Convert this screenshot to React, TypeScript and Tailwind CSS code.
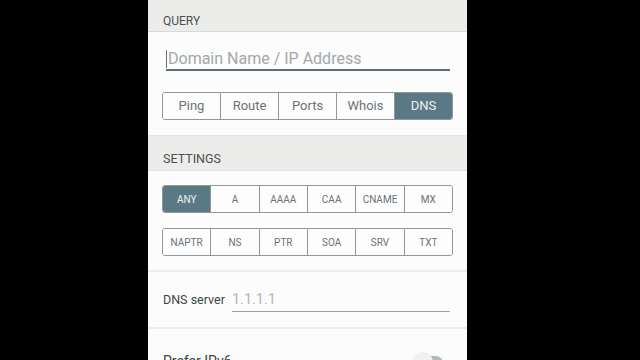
import React from "react";

const font = { fontFamily: "Roboto, 'Noto Sans', sans-serif" };

function Seg({ items, active, size }: { items: string[]; active: string; size: "lg" | "sm" }) {
  return (
    <div className="flex h-[28px] rounded-[3px] border border-[#8f9799] overflow-hidden">
      {items.map((it, i) => (
        <div
          key={it}
          className={
            "flex-1 flex items-center justify-center " +
            (i > 0 ? "border-l border-[#8f9799] " : "") +
            (it === active ? "bg-[#5a7985] text-[#eef2f3] " : "bg-[#fcfdfc] text-[#6c7274] ") +
            (size === "lg" ? "text-[13px]" : "text-[10px]")
          }
        >
          {it}
        </div>
      ))}
    </div>
  );
}

export default function App() {
  return (
    <div className="w-[640px] h-[360px] bg-black flex overflow-hidden" style={font}>
      <div className="ml-[148px] w-[319px] h-[360px] bg-[#fbfcfb] flex flex-col overflow-hidden">
        <div className="h-[32px] shrink-0 bg-[#ecedea] border-b border-[#d6d9d6] flex items-end pl-[15px] pb-[3px]">
          <span className="text-[12px] leading-[14px] text-[#4a4f50]">QUERY</span>
        </div>
        <div className="pl-[18px] pr-[17px] pt-[16px] shrink-0">
          <div className="h-[23px] border-b-2 border-[#5c6f76] flex items-center">
            <div className="w-[1px] h-[18px] bg-[#5c6f76] mr-[1px]" />
            <span className="text-[16px] leading-[20px] text-[#a3a8a9]">Domain Name / IP Address</span>
          </div>
        </div>
        <div className="pl-[14px] pr-[14px] pt-[21px] pb-[15px] shrink-0">
          <Seg items={["Ping", "Route", "Ports", "Whois", "DNS"]} active="DNS" size="lg" />
        </div>
        <div className="h-[36px] shrink-0 bg-[#ecedea] border-t border-[#e2e4e1] border-b border-[#d6d9d6] flex items-end pl-[15px] pb-[4px]">
          <span className="text-[12.5px] leading-[14px] text-[#4a4f50]">SETTINGS</span>
        </div>
        <div className="pl-[14px] pr-[14px] pt-[14px] pb-[14px] flex flex-col gap-[15px] shrink-0">
          <Seg items={["ANY", "A", "AAAA", "CAA", "CNAME", "MX"]} active="ANY" size="sm" />
          <Seg items={["NAPTR", "NS", "PTR", "SOA", "SRV", "TXT"]} active="" size="sm" />
        </div>
        <div className="h-[2px] bg-[#ecedea] shrink-0" />
        <div className="h-[57px] shrink-0 flex items-center pl-[15px] pr-[17px] border-b-2 border-[#eceeeb]">
          <span className="text-[12.5px] text-[#3f4445] mr-[7px] mt-[1px]">DNS server</span>
          <div className="flex-1 h-[22px] border-b border-[#9ea4a5] flex items-center mt-[2px]">
            <span className="text-[14.5px] text-[#b3b7b8] leading-[18px]">1.1.1.1</span>
          </div>
        </div>
        <div className="flex items-start pl-[15px] pr-[22px] pt-[22px] shrink-0 relative">
          <span className="text-[14px] text-[#3f4445]">Prefer IPv6</span>
          <div className="ml-auto relative w-[32px] h-[20px] mt-[1px]">
            <div className="absolute left-[6px] right-[2px] top-[4px] h-[14px] rounded-full bg-[#b5b8b8]" />
            <div className="absolute left-0 top-0 w-[20px] h-[20px] rounded-full bg-[#f1f1f1] shadow" />
          </div>
        </div>
      </div>
    </div>
  );
}
